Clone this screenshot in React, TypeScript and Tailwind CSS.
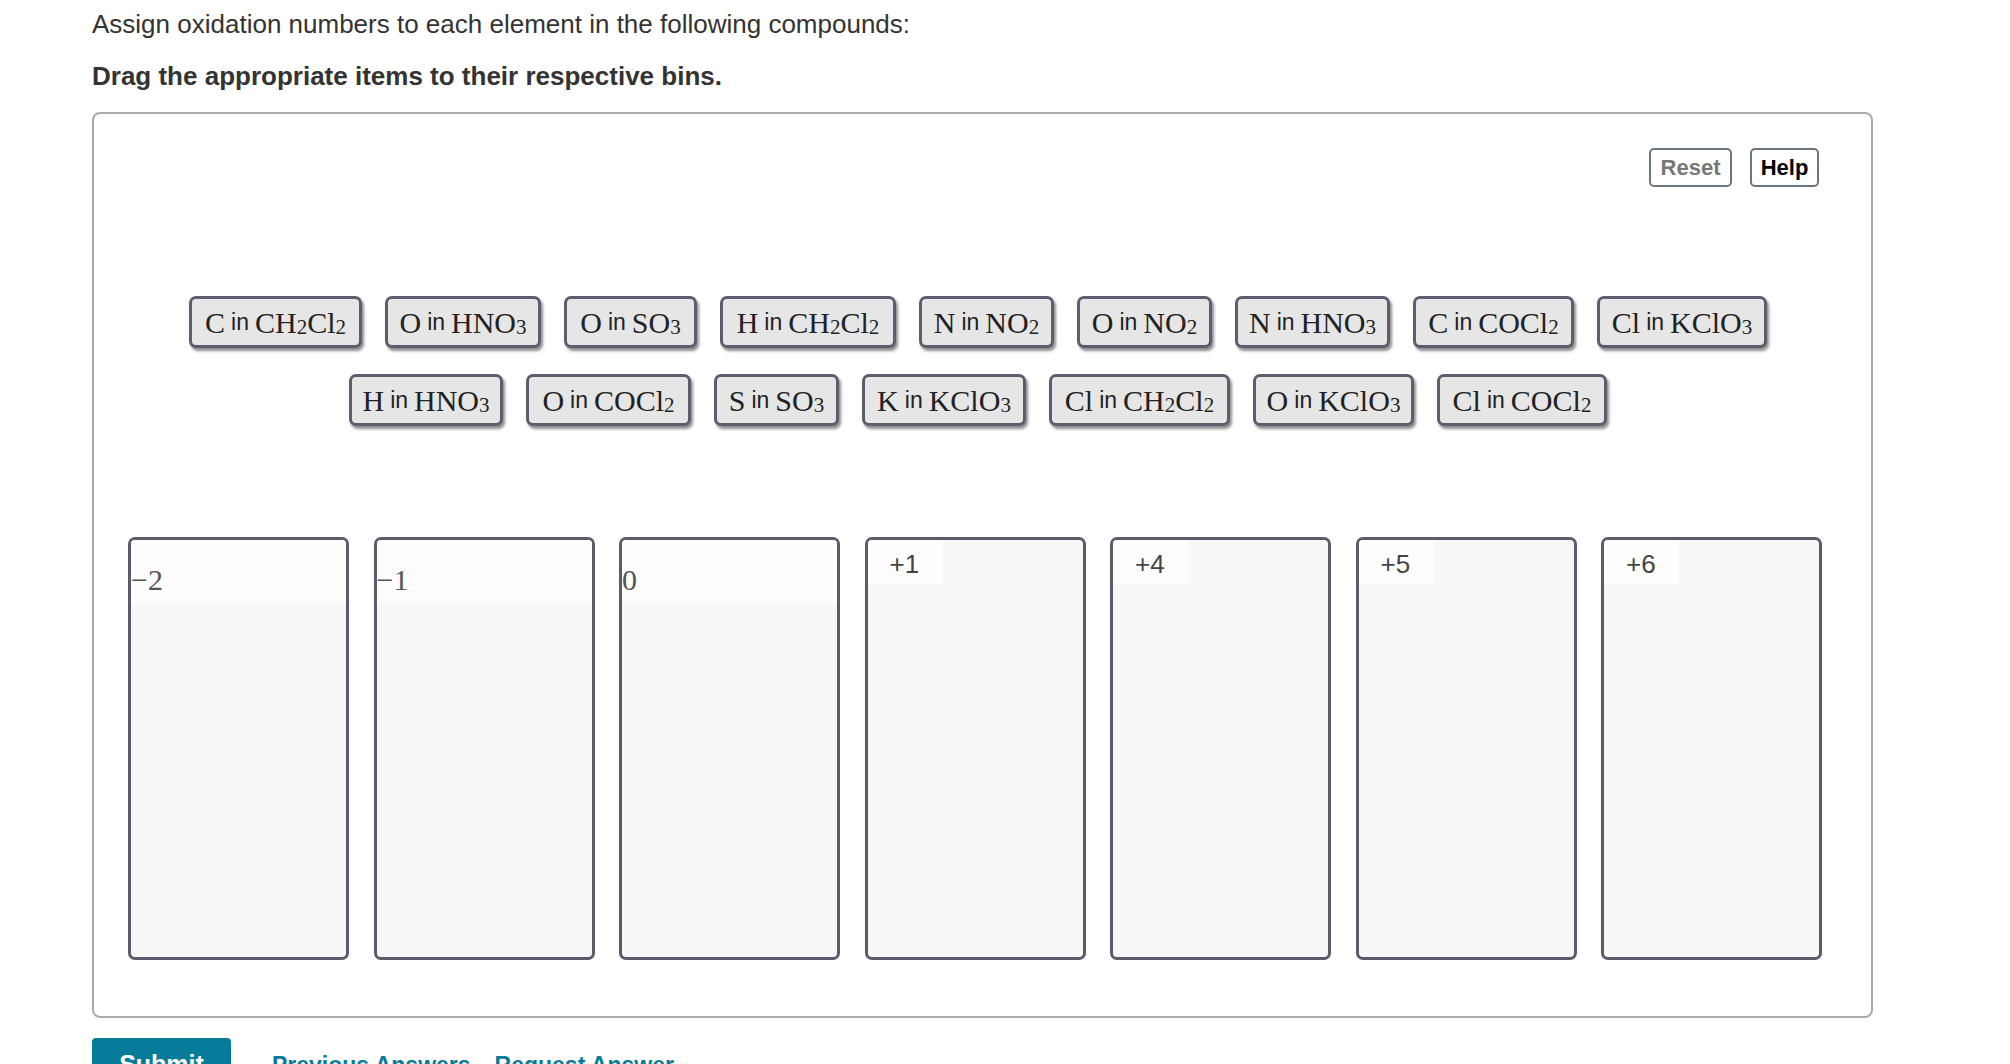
import React from 'react'

type Chip = { el: string; formula: string; w: string }

const rowOne: Chip[] = [
  { el: 'C', formula: 'CH2Cl2', w: 'w-[173px]' },
  { el: 'O', formula: 'HNO3', w: 'w-[156px]' },
  { el: 'O', formula: 'SO3', w: 'w-[133px]' },
  { el: 'H', formula: 'CH2Cl2', w: 'w-[176px]' },
  { el: 'N', formula: 'NO2', w: 'w-[135px]' },
  { el: 'O', formula: 'NO2', w: 'w-[135px]' },
  { el: 'N', formula: 'HNO3', w: 'w-[155px]' },
  { el: 'C', formula: 'COCl2', w: 'w-[161px]' },
  { el: 'Cl', formula: 'KClO3', w: 'w-[170px]' },
]

const rowTwo: Chip[] = [
  { el: 'H', formula: 'HNO3', w: 'w-[154px]' },
  { el: 'O', formula: 'COCl2', w: 'w-[165px]' },
  { el: 'S', formula: 'SO3', w: 'w-[125px]' },
  { el: 'K', formula: 'KClO3', w: 'w-[164px]' },
  { el: 'Cl', formula: 'CH2Cl2', w: 'w-[181px]' },
  { el: 'O', formula: 'KClO3', w: 'w-[161px]' },
  { el: 'Cl', formula: 'COCl2', w: 'w-[170px]' },
]

const bins = [
  { label: '\u22122', math: true },
  { label: '\u22121', math: true },
  { label: '0', math: true },
  { label: '+1', math: false },
  { label: '+4', math: false },
  { label: '+5', math: false },
  { label: '+6', math: false },
]

// split "CH2Cl2" into letters and subscript digits
function Formula({ text }: { text: string }) {
  const parts = text.match(/[A-Za-z]+|\d+/g) ?? []
  return (
    <>
      {parts.map((p, i) =>
        /\d/.test(p) ? (
          <sub key={i} className="text-[21px]">
            {p}
          </sub>
        ) : (
          <span key={i}>{p}</span>
        )
      )}
    </>
  )
}

function ChipItem({ chip }: { chip: Chip }) {
  return (
    <div
      className={`${chip.w} flex h-[52px] items-center justify-center whitespace-nowrap rounded-[7px] border-[3px] border-[#5d5d6f] bg-[#e6e6e6] text-[#222] shadow-[2px_3px_3px_rgba(0,0,0,0.45)] font-['Liberation_Serif',serif] text-[30px]`}
    >
      <span>{chip.el}</span>
      <span className="mx-[6px] font-['Liberation_Sans',sans-serif] text-[23px]">in</span>
      <Formula text={chip.formula} />
    </div>
  )
}

export default function App() {
  return (
    <div className="min-h-screen bg-white pl-[92px] text-[#333] font-['Liberation_Sans',Arial,sans-serif]">
      <p className="pt-[9px] text-[26px] leading-[30px]">
        Assign oxidation numbers to each element in the following compounds:
      </p>
      <p className="mt-[22px] text-[26px] font-bold leading-[30px]">
        Drag the appropriate items to their respective bins.
      </p>

      <div className="mt-[21px] w-[1781px] rounded-[8px] border-2 border-[#aaaaaa] pb-[56px] pt-[34px]">
        <div className="flex justify-end gap-[18px] pr-[52px]">
          <button className="h-[39px] w-[83px] rounded-[5px] border-2 border-[#6b7780] text-[22px] font-bold text-[#777]">
            Reset
          </button>
          <button className="h-[39px] w-[69px] rounded-[5px] border-2 border-[#6b7780] text-[22px] font-bold text-black">
            Help
          </button>
        </div>

        <div className="mt-[109px] flex flex-col gap-[26px] pr-[9px]">
          <div className="flex justify-center gap-[23px]">
            {rowOne.map((c, i) => (
              <ChipItem key={i} chip={c} />
            ))}
          </div>
          <div className="flex justify-center gap-[23px]">
            {rowTwo.map((c, i) => (
              <ChipItem key={i} chip={c} />
            ))}
          </div>
        </div>

        <div className="mt-[111px] flex gap-[24.5px] pl-[34px]">
          {bins.map((b, i) => (
            <div
              key={i}
              className="h-[423px] w-[221px] overflow-hidden rounded-[7px] border-[3px] border-[#5b5b6c] bg-[#f7f7f7]"
            >
              {b.math ? (
                <div className="flex h-[63px] items-end bg-[#fdfdfd] pb-[8px] font-['Liberation_Serif',serif] text-[30px] leading-none text-[#555]">
                  {b.label}
                </div>
              ) : (
                <div className="flex h-[44px] w-[75px] items-center bg-[#fdfdfd] pl-[22px] pt-[4px] text-[26px] text-[#444]">
                  {b.label}
                </div>
              )}
            </div>
          ))}
        </div>
      </div>

      <div className="mt-[20px] flex items-start">
        <button className="h-[52px] w-[139px] rounded-[4px] bg-[#087b9b] pt-[2px] text-[25px] font-bold text-white">
          Submit
        </button>
        <a className="ml-[41px] mt-[10px] text-[23px] font-bold text-[#087b9b]">Previous Answers</a>
        <a className="ml-[24px] mt-[10px] text-[23px] font-bold text-[#087b9b]">Request Answer</a>
      </div>
    </div>
  )
}
